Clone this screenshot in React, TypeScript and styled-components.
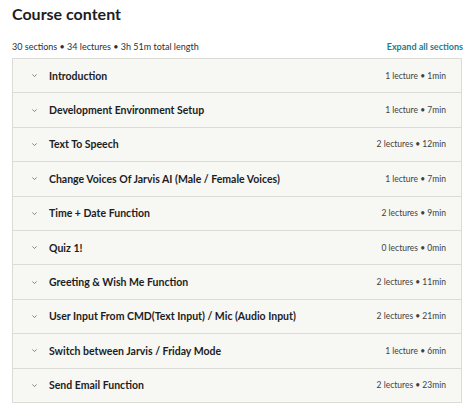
import React from 'react'
import styled, { createGlobalStyle } from 'styled-components'

const GlobalStyle = createGlobalStyle`
  html, body {
    margin: 0;
    padding: 0;
    background: #ffffff;
  }
  body {
    font-family: Lato, "Open Sans", sans-serif;
    color: #1c1d1f;
  }
`

interface Section {
  title: string;
  lectures: number;
  minutes: number;
}

const sections: Section[] = [
  { title: 'Introduction', lectures: 1, minutes: 1 },
  { title: 'Development Environment Setup', lectures: 1, minutes: 7 },
  { title: 'Text To Speech', lectures: 2, minutes: 12 },
  { title: 'Change Voices Of Jarvis AI (Male / Female Voices)', lectures: 1, minutes: 7 },
  { title: 'Time + Date Function', lectures: 2, minutes: 9 },
  { title: 'Quiz 1!', lectures: 0, minutes: 0 },
  { title: 'Greeting & Wish Me Function', lectures: 2, minutes: 11 },
  { title: 'User Input From CMD(Text Input) / Mic (Audio Input)', lectures: 2, minutes: 21 },
  { title: 'Switch between Jarvis / Friday Mode', lectures: 1, minutes: 6 },
  { title: 'Send Email Function', lectures: 2, minutes: 23 },
]

const Wrapper = styled.div`
  padding: 3px 12px 0 12px;
  width: 450px;
`

const Heading = styled.h2`
  margin: 0;
  font-size: 16px;
  font-weight: 700;
  line-height: 22px;
  color: #1c1d1f;
`

const SummaryBar = styled.div`
  display: flex;
  align-items: center;
  justify-content: space-between;
  margin-top: 15px;
  height: 12px;
  margin-bottom: 6px;
`

const Summary = styled.span`
  font-size: 9px;
  color: #2d2f31;
`

const ExpandLink = styled.a`
  font-size: 9px;
  font-weight: 700;
  color: #1b7d8f;
  margin-right: -1px;
  cursor: pointer;
`

const List = styled.div`
  border: 1px solid #dcdcd6;
  border-bottom: none;
`

const Row = styled.div`
  display: flex;
  align-items: center;
  height: 33.4px;
  background: #f7f7f4;
  border-bottom: 1px solid #dcdcd6;
  padding: 0 15px 0 18px;
`

const Chevron = styled.svg`
  width: 7px;
  height: 7px;
  flex: none;
  margin-right: 11px;
`

const Title = styled.span`
  flex: 1;
  font-size: 10.5px;
  font-weight: 700;
  color: #1c1d1f;
  white-space: nowrap;
`

const Meta = styled.span`
  font-size: 8.5px;
  color: #3e4143;
  white-space: nowrap;
`

const meta = (s: Section) =>
  `${s.lectures} ${s.lectures === 1 ? 'lecture' : 'lectures'} • ${s.minutes}min`

export default function App() {
  return (
    <Wrapper>
      <GlobalStyle />
      <Heading>Course content</Heading>
      <SummaryBar>
        <Summary>30 sections • 34 lectures • 3h 51m total length</Summary>
        <ExpandLink>Expand all sections</ExpandLink>
      </SummaryBar>
      <List>
        {sections.map((s) => (
          <Row key={s.title}>
            <Chevron viewBox="0 0 10 10">
              <path d="M2 3.5 L5 6.5 L8 3.5" fill="none" stroke="#6a6f73" strokeWidth="1.2" />
            </Chevron>
            <Title>{s.title}</Title>
            <Meta>{meta(s)}</Meta>
          </Row>
        ))}
      </List>
    </Wrapper>
  )
}
